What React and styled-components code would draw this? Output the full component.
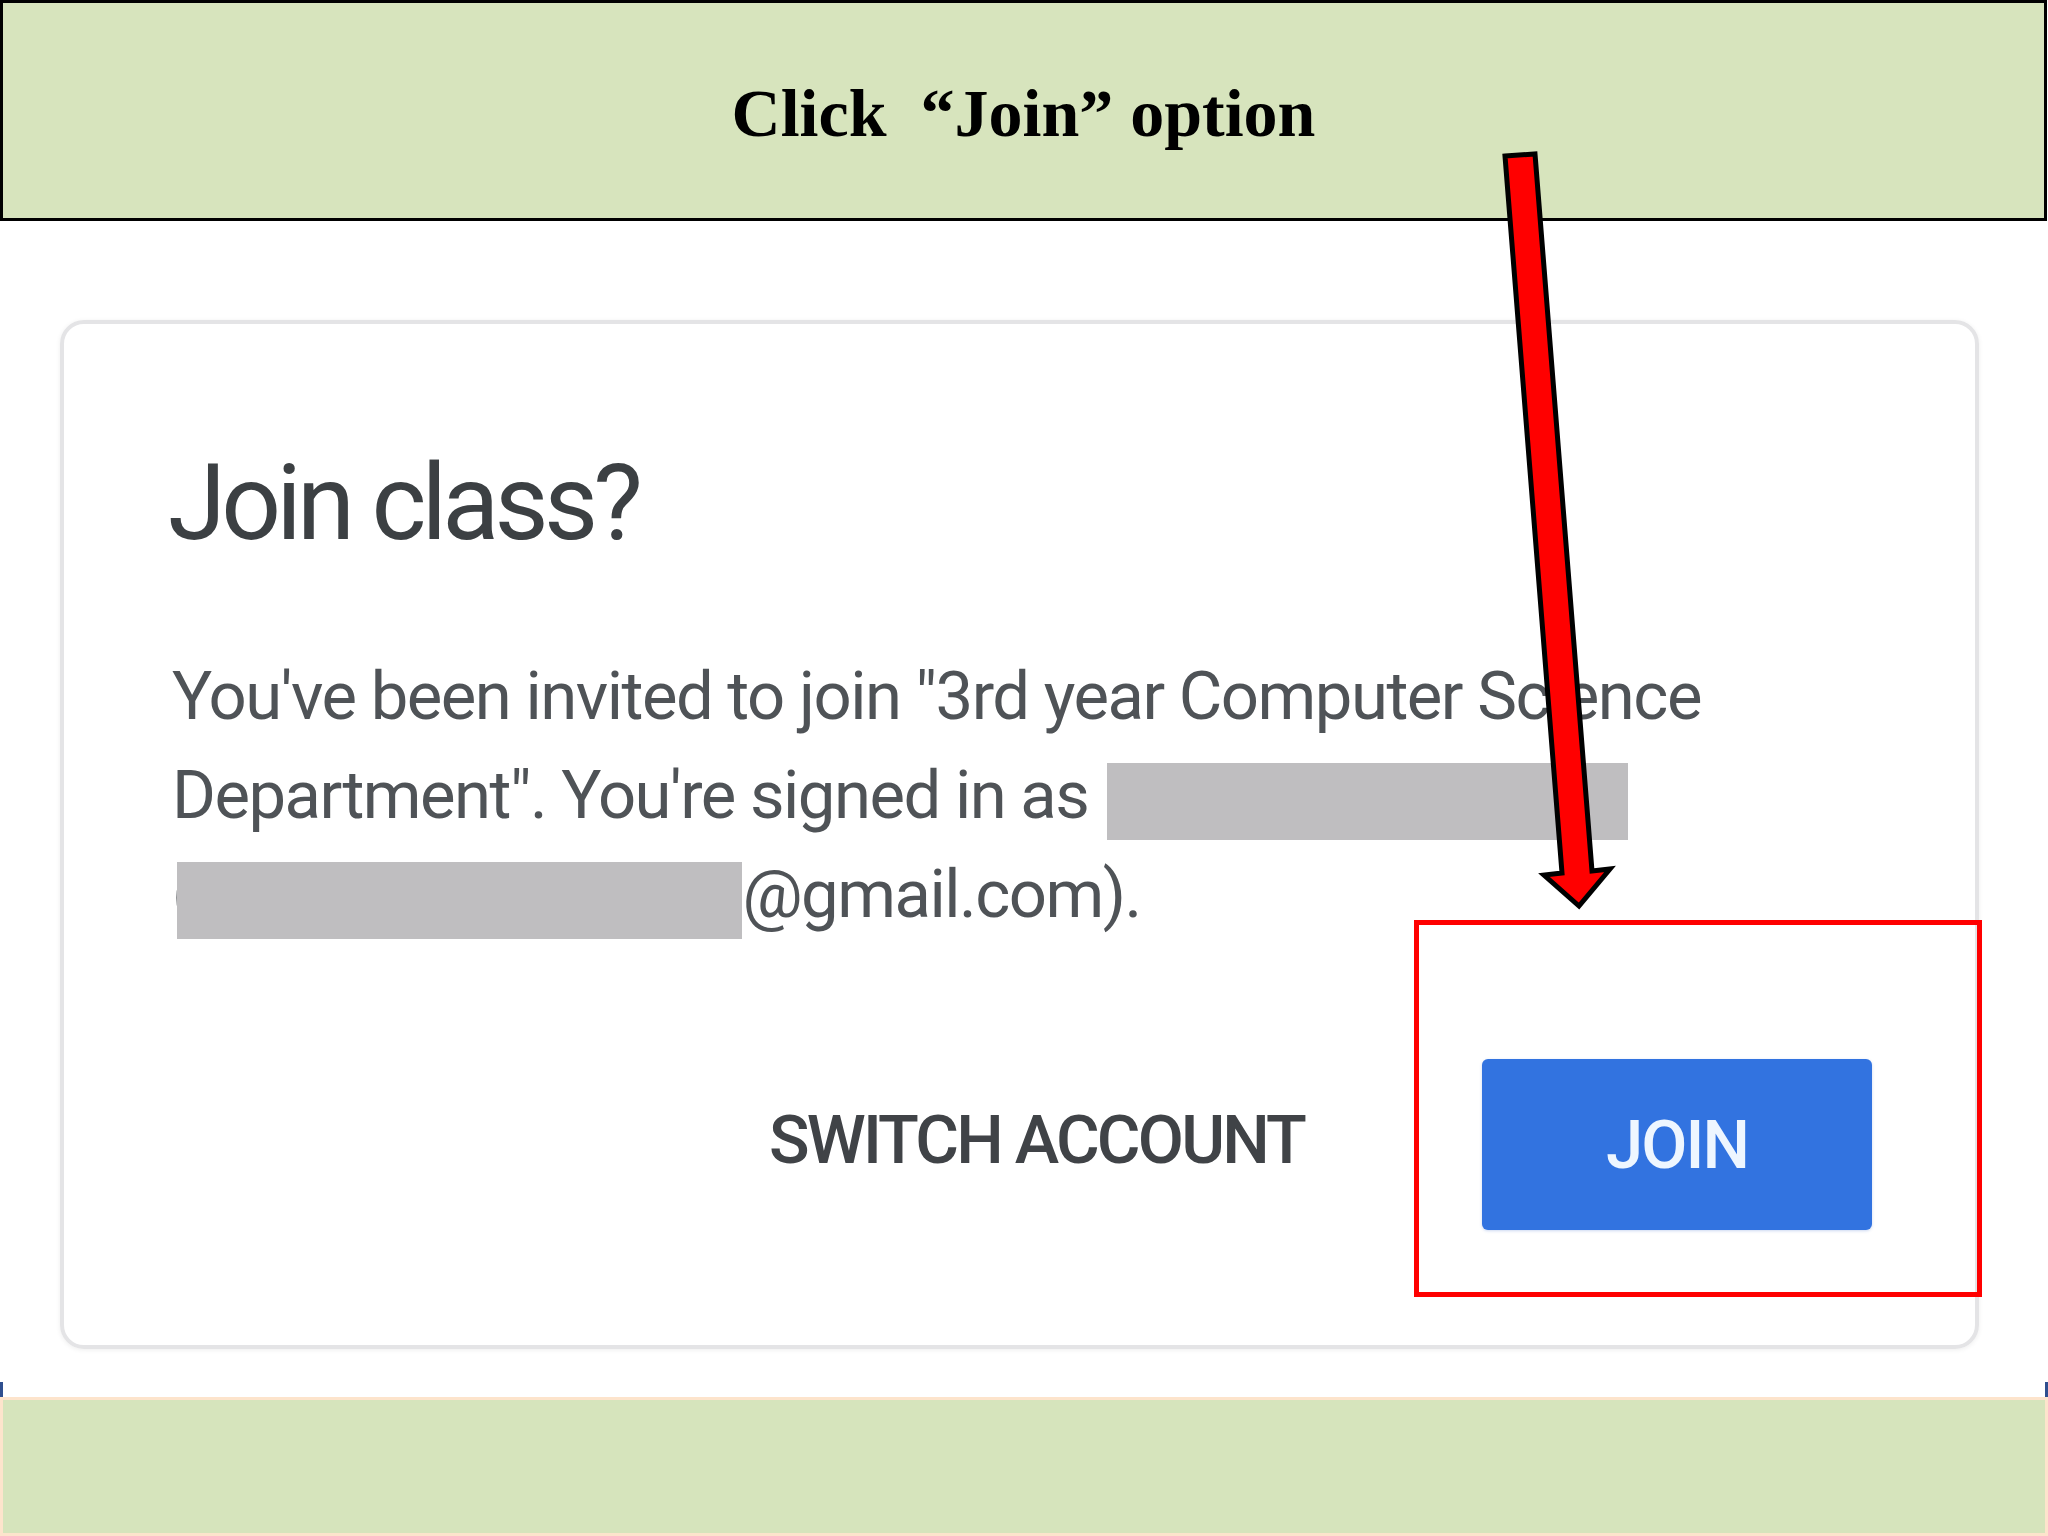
import React from 'react'
import styled, { createGlobalStyle } from 'styled-components'

const Global = createGlobalStyle`
  html, body {
    margin: 0;
    padding: 0;
    background: #fff;
  }
`

const App = () => {
  return (
    <Page>
      <Global />
      <Banner>Click  “Join” option</Banner>

      <Stage>
        <Card>
          <Title>Join class?</Title>
          <Message>
            You've been invited to join "3rd year Computer Science
            <br />
            Department". You're signed in as <Redacted width={521} />
            <br />
            (<Redacted width={565} overlap />@gmail.com).
          </Message>
          <Actions>
            <TextButton>SWITCH ACCOUNT</TextButton>
            <JoinButton>JOIN</JoinButton>
          </Actions>
        </Card>
      </Stage>

      <Footer>
        <Tick side="left" />
        <Tick side="right" />
      </Footer>

      <Highlight />
      <Arrow viewBox="0 0 2048 1536" width="2048" height="1536">
        <polygon
          points="1505,156 1535,154 1592,871 1610,869 1579,906 1544,875 1562,873"
          fill="#ff0000"
          stroke="#000"
          strokeWidth="5"
          strokeLinejoin="miter"
        />
      </Arrow>
    </Page>
  )
}

export default App

const Page = styled.div`
  position: relative;
  width: 2048px;
  height: 1536px;
  display: flex;
  flex-direction: column;
  overflow: hidden;
  background: #fff;
`

const Banner = styled.div`
  box-sizing: border-box;
  height: 221px;
  width: 2047px;
  border: 3px solid #000;
  background: #d7e4bd;
  display: flex;
  align-items: center;
  justify-content: center;
  padding-top: 6px;
  font-family: "Liberation Serif", "Times New Roman", serif;
  font-weight: bold;
  font-size: 68px;
  color: #000;
  white-space: pre;
`

const Stage = styled.div`
  flex: 1;
  padding: 99px 69px 0 60px;
`

const Card = styled.div`
  box-sizing: border-box;
  height: 1029px;
  border: 4px solid #e4e4e6;
  border-radius: 24px;
  box-shadow: 0 1px 5px rgba(0, 0, 0, 0.07);
  padding: 117px 103px 0 104px;
  display: flex;
  flex-direction: column;
  font-family: Roboto, "Noto Sans", sans-serif;
`

const Title = styled.h1`
  margin: 0;
  font-size: 105px;
  line-height: 126px;
  font-weight: 400;
  color: #3c4043;
  letter-spacing: -4.8px;
`

const Message = styled.p`
  margin: 80px 0 0 4px;
  font-size: 67px;
  line-height: 99px;
  color: #4f5357;
  white-space: nowrap;
  letter-spacing: -1.5px;
`

const Redacted = styled.span`
  display: inline-block;
  width: ${({ width }) => width}px;
  height: 77px;
  vertical-align: -22px;
  background: #bfbec0;
  margin-left: ${({ overlap }) => (overlap ? '-16px' : '4px')};
`

const Actions = styled.div`
  margin-top: 115px;
  display: flex;
  justify-content: flex-end;
  align-items: center;
`

const TextButton = styled.button`
  border: none;
  background: transparent;
  padding: 0;
  margin-right: 178px;
  margin-top: -10px;
  font-family: Roboto, "Noto Sans", sans-serif;
  font-size: 67px;
  font-weight: 500;
  letter-spacing: -2.8px;
  color: #404347;
  cursor: pointer;
`

const JoinButton = styled.button`
  width: 390px;
  height: 171px;
  border: none;
  border-radius: 6px;
  background: #3273e0;
  box-shadow: 0 1px 3px rgba(50, 100, 200, 0.25);
  font-family: Roboto, "Noto Sans", sans-serif;
  font-size: 67px;
  font-weight: 500;
  letter-spacing: -2px;
  color: #eef6ff;
  cursor: pointer;
`

const Footer = styled.div`
  position: relative;
  box-sizing: border-box;
  height: 139px;
  border: 3px solid #fde4cc;
  background: #d6e4bc;
`

const Tick = styled.span`
  position: absolute;
  top: -18px;
  ${({ side }) => (side === 'left' ? 'left: -3px;' : 'right: -3px;')}
  width: 3px;
  height: 15px;
  background: #2f4f8f;
`

const Highlight = styled.div`
  position: absolute;
  left: 1414px;
  top: 920px;
  width: 568px;
  height: 377px;
  box-sizing: border-box;
  border: 5px solid #ff0000;
  pointer-events: none;
`

const Arrow = styled.svg`
  position: absolute;
  left: 0;
  top: 0;
  pointer-events: none;
`
